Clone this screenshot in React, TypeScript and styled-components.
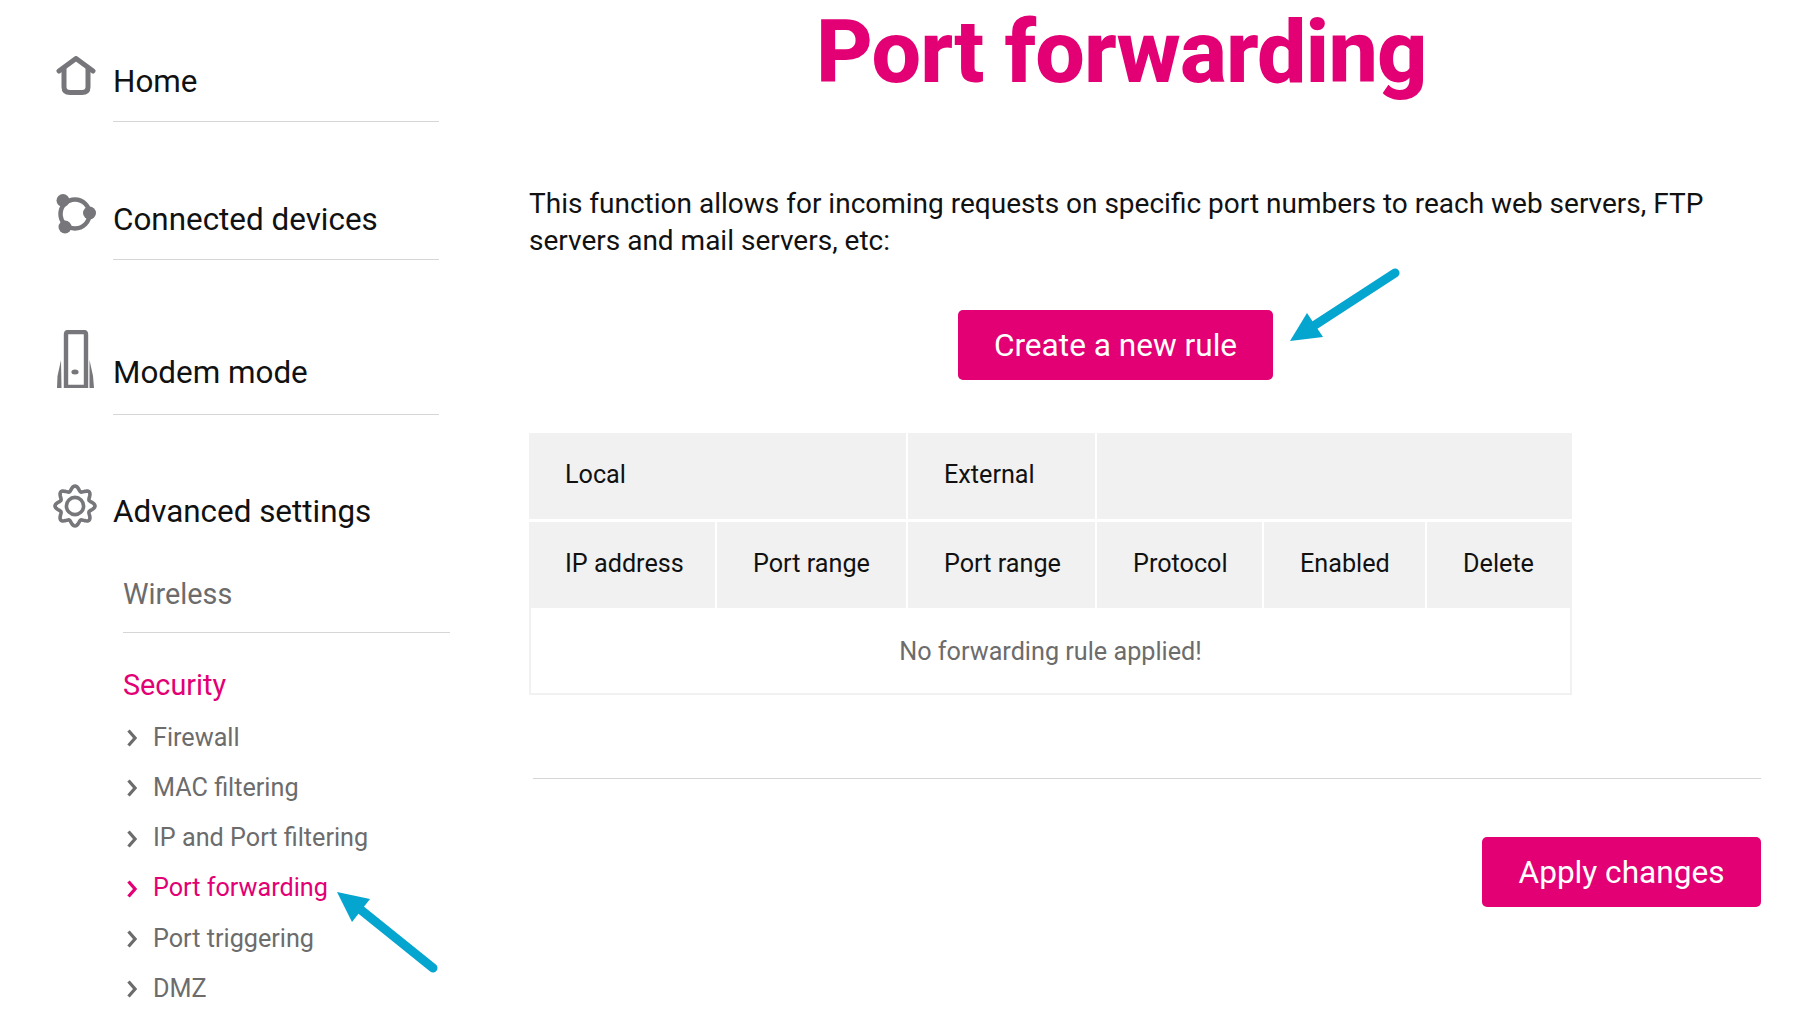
import { FC } from 'react'
import styled, { createGlobalStyle } from 'styled-components'

const PINK = '#e20074'
const GREY = '#6c6c6c'
const ICON = '#77767a'
const LINE = '#d6d6d6'
const CELL = '#f1f1f1'
const ARROW = '#04a5cf'

const gearPath = (() => {
  const pts: string[] = []
  for (let i = 0; i < 160; i++) {
    const a = (i / 160) * Math.PI * 2
    const r = 17.6 + 2.4 * Math.cos(a * 8)
    const x = 22 + r * Math.sin(a)
    const y = 22 - r * Math.cos(a)
    pts.push(`${x.toFixed(2)},${y.toFixed(2)}`)
  }
  return `M${pts.join(' L')} Z`
})()

const HomeIcon = () => (
  <svg width="40" height="40" viewBox="0 0 40 40" fill="none" stroke={ICON} strokeWidth="5" strokeLinecap="round" strokeLinejoin="round">
    <path d="M3 15 L20 2.5 L37 15" />
    <path d="M8 13 V31 Q8 36.5 14 36.5 H26 Q32 36.5 32 31 V13" />
  </svg>
)

const DevicesIcon = () => (
  <svg width="40" height="40" viewBox="0 0 40 40" fill={ICON}>
    <circle cx="19" cy="20" r="14.5" fill="none" stroke={ICON} strokeWidth="4.5" />
    <circle cx="7" cy="6.5" r="6.5" />
    <circle cx="33.5" cy="19" r="6.5" />
    <circle cx="9" cy="33" r="6.5" />
  </svg>
)

const ModemIcon = () => (
  <svg width="40" height="58" viewBox="0 0 40 58" fill={ICON}>
    <path d="M10 57 V4.5 Q10 2 12.5 2 H27.5 Q30 2 30 4.5 V57 Z" fill="none" stroke={ICON} strokeWidth="4.4" />
    <ellipse cx="19" cy="42" rx="3.6" ry="2.5" />
    <polygon points="5,30 5.5,58 1,58 1.5,46" />
    <polygon points="33.5,30 33.5,58 38,58 37,46" />
  </svg>
)

const GearIcon = () => (
  <svg width="44" height="44" viewBox="0 0 44 44" fill="none" stroke={ICON} strokeWidth="3.6">
    <path d={gearPath} />
    <circle cx="22" cy="22" r="8.6" />
  </svg>
)

const Chevron: FC<{ color: string }> = ({ color }) => (
  <ChevronIcon width="10" height="20" viewBox="0 0 10 20" fill="none" stroke={color} strokeWidth="3.2">
    <path d="M1.5 2.5 L8 10 L1.5 17.5" />
  </ChevronIcon>
)

const menu = ['Firewall', 'MAC filtering', 'IP and Port filtering', 'Port forwarding', 'Port triggering', 'DMZ']

const App: FC = () => {
  return (
    <Page>
      <GlobalStyle />
      <Sidebar>
        <NavRow $height={66} $gap={0}>
          <IconSlot><HomeIcon /></IconSlot>
          <NavLabel $line $pad={19}>Home</NavLabel>
        </NavRow>
        <NavRow $height={66} $gap={72}>
          <IconSlot><DevicesIcon /></IconSlot>
          <NavLabel $line $pad={19}>Connected devices</NavLabel>
        </NavRow>
        <NavRow $height={85} $gap={70}>
          <IconSlot><ModemIcon /></IconSlot>
          <NavLabel $line $pad={21}>Modem mode</NavLabel>
        </NavRow>
        <NavRow $height={68} $gap={69}>
          <IconSlot $shift={-3}><GearIcon /></IconSlot>
          <NavLabel $pad={20}>Advanced settings</NavLabel>
        </NavRow>
        <SubNav>
          <SubHead $line>Wireless</SubHead>
          <SubHead $active>Security</SubHead>
          <SubList>
            {menu.map(name => {
              const active = name === 'Port forwarding'
              return (
                <SubItem key={name} $active={active}>
                  <Chevron color={active ? PINK : GREY} />
                  {name}
                  {active && (
                    <SideArrow width="106" height="86" viewBox="0 0 106 86">
                      <line x1="26" y1="20" x2="98" y2="78" stroke={ARROW} strokeWidth="9" strokeLinecap="round" />
                      <polygon points="2,2 35,9 17,32" fill={ARROW} />
                    </SideArrow>
                  )}
                </SubItem>
              )
            })}
          </SubList>
        </SubNav>
      </Sidebar>
      <Main>
        <Title>Port forwarding</Title>
        <Intro>
          This function allows for incoming requests on specific port numbers to reach web servers, FTP
          <br />
          servers and mail servers, etc:
        </Intro>
        <CreateRow>
          <PinkButton $width={315}>Create a new rule</PinkButton>
          <CreateArrow width="112" height="76" viewBox="0 0 112 76">
            <line x1="107" y1="6" x2="27" y2="58" stroke={ARROW} strokeWidth="9" strokeLinecap="round" />
            <polygon points="2,74 19,46 35,70" fill={ARROW} />
          </CreateArrow>
        </CreateRow>
        <RuleTable>
          <colgroup>
            <Col $w={188} />
            <Col $w={191} />
            <Col $w={189} />
            <Col $w={167} />
            <Col $w={163} />
            <Col $w={145} />
          </colgroup>
          <thead>
            <tr>
              <HeadCell colSpan={2} $top>Local</HeadCell>
              <HeadCell $top>External</HeadCell>
              <HeadCell colSpan={3} $top />
            </tr>
            <tr>
              <HeadCell>IP address</HeadCell>
              <HeadCell>Port range</HeadCell>
              <HeadCell>Port range</HeadCell>
              <HeadCell>Protocol</HeadCell>
              <HeadCell>Enabled</HeadCell>
              <HeadCell>Delete</HeadCell>
            </tr>
          </thead>
          <tbody>
            <tr>
              <EmptyCell colSpan={6}>No forwarding rule applied!</EmptyCell>
            </tr>
          </tbody>
        </RuleTable>
        <Footer>
          <PinkButton $width={279}>Apply changes</PinkButton>
        </Footer>
      </Main>
    </Page>
  )
}

const GlobalStyle = createGlobalStyle`
  html, body {
    margin: 0;
    background: #fff;
    font-family: Roboto, "Liberation Sans", sans-serif;
    color: #111;
  }
`

const Page = styled('div')`
  display: flex;
  width: 1811px;
  height: 1026px;
  overflow: hidden;
`

const Sidebar = styled('nav')`
  width: 475px;
  padding: 56px 0 0 53px;
  flex-shrink: 0;
`

const NavRow = styled('div')<{ $height: number; $gap: number }>`
  display: flex;
  height: ${p => p.$height}px;
  margin-top: ${p => p.$gap}px;
  width: 386px;
`

const IconSlot = styled('div')<{ $shift?: number }>`
  width: 57px;
  flex-shrink: 0;
  padding-left: 3px;
  margin-left: ${p => p.$shift ?? 0}px;
  margin-right: ${p => -(p.$shift ?? 0)}px;
  > svg {
    display: block;
  }
`

const NavLabel = styled('div')<{ $line?: boolean; $pad: number }>`
  flex: 1;
  display: flex;
  align-items: flex-end;
  padding-bottom: ${p => p.$pad}px;
  font-size: 31.4px;
  line-height: 40px;
  border-bottom: ${p => (p.$line ? `1px solid ${LINE}` : 'none')};
`

const SubNav = styled('div')`
  margin: 22px 0 0 70px;
  width: 327px;
`

const SubHead = styled('div')<{ $line?: boolean; $active?: boolean }>`
  font-size: 28.8px;
  line-height: 40px;
  color: ${p => (p.$active ? PINK : GREY)};
  padding-bottom: ${p => (p.$line ? 18 : 0)}px;
  margin-bottom: ${p => (p.$line ? 32 : 0)}px;
  border-bottom: ${p => (p.$line ? `1px solid ${LINE}` : 'none')};
`

const SubList = styled('div')`
  margin-top: 7px;
`

const SubItem = styled('div')<{ $active?: boolean }>`
  position: relative;
  display: flex;
  align-items: center;
  gap: 16px;
  height: 50.25px;
  padding-left: 4px;
  font-size: 25.2px;
  color: ${p => (p.$active ? PINK : GREY)};
`

const ChevronIcon = styled('svg')`
  margin-top: 2px;
  flex-shrink: 0;
`

const SideArrow = styled('svg')`
  position: absolute;
  left: 212px;
  top: 27px;
`

const Main = styled('main')`
  flex: 1;
  padding: 0 50px 0 1px;
`

const Title = styled('h1')`
  margin: 0 0 0 287px;
  font-size: 88px;
  line-height: 104px;
  font-weight: 800;
  letter-spacing: -0.9px;
  color: ${PINK};
  white-space: nowrap;
`

const Intro = styled('p')`
  margin: 81px 0 0;
  font-size: 28px;
  line-height: 37px;
  white-space: nowrap;
`

const CreateRow = styled('div')`
  position: relative;
  margin: 51px 0 0 429px;
`

const CreateArrow = styled('svg')`
  position: absolute;
  left: 330px;
  top: -43px;
`

const PinkButton = styled('button')<{ $width: number }>`
  display: block;
  width: ${p => p.$width}px;
  height: 70px;
  padding: 0;
  border: 0;
  border-radius: 5px;
  background: ${PINK};
  color: #fff;
  font: inherit;
  font-size: 31.6px;
`

const RuleTable = styled('table')`
  width: 1043px;
  margin: 53px 0 0;
  table-layout: fixed;
  border-collapse: separate;
  border-spacing: 0;
`

const Col = styled('col')<{ $w: number }>`
  width: ${p => p.$w}px;
`

const HeadCell = styled('th')<{ $top?: boolean }>`
  box-sizing: border-box;
  height: ${p => (p.$top ? 89 : 86)}px;
  padding: 0 0 4px 36px;
  background: ${CELL};
  background-clip: padding-box;
  border-right: 2px solid #fff;
  border-bottom: ${p => (p.$top ? '3px solid #fff' : 'none')};
  text-align: left;
  font-size: 25.2px;
  font-weight: 400;
  white-space: nowrap;
  &:last-child {
    border-right: 0;
  }
`

const EmptyCell = styled('td')`
  box-sizing: border-box;
  height: 87px;
  padding-top: 2px;
  border: 2px solid ${CELL};
  border-top: 0;
  text-align: center;
  font-size: 25.2px;
  color: ${GREY};
`

const Footer = styled('div')`
  margin-top: 83px;
  margin-left: 4px;
  padding-top: 58px;
  border-top: 1px solid ${LINE};
  display: flex;
  justify-content: flex-end;
`

export default App
